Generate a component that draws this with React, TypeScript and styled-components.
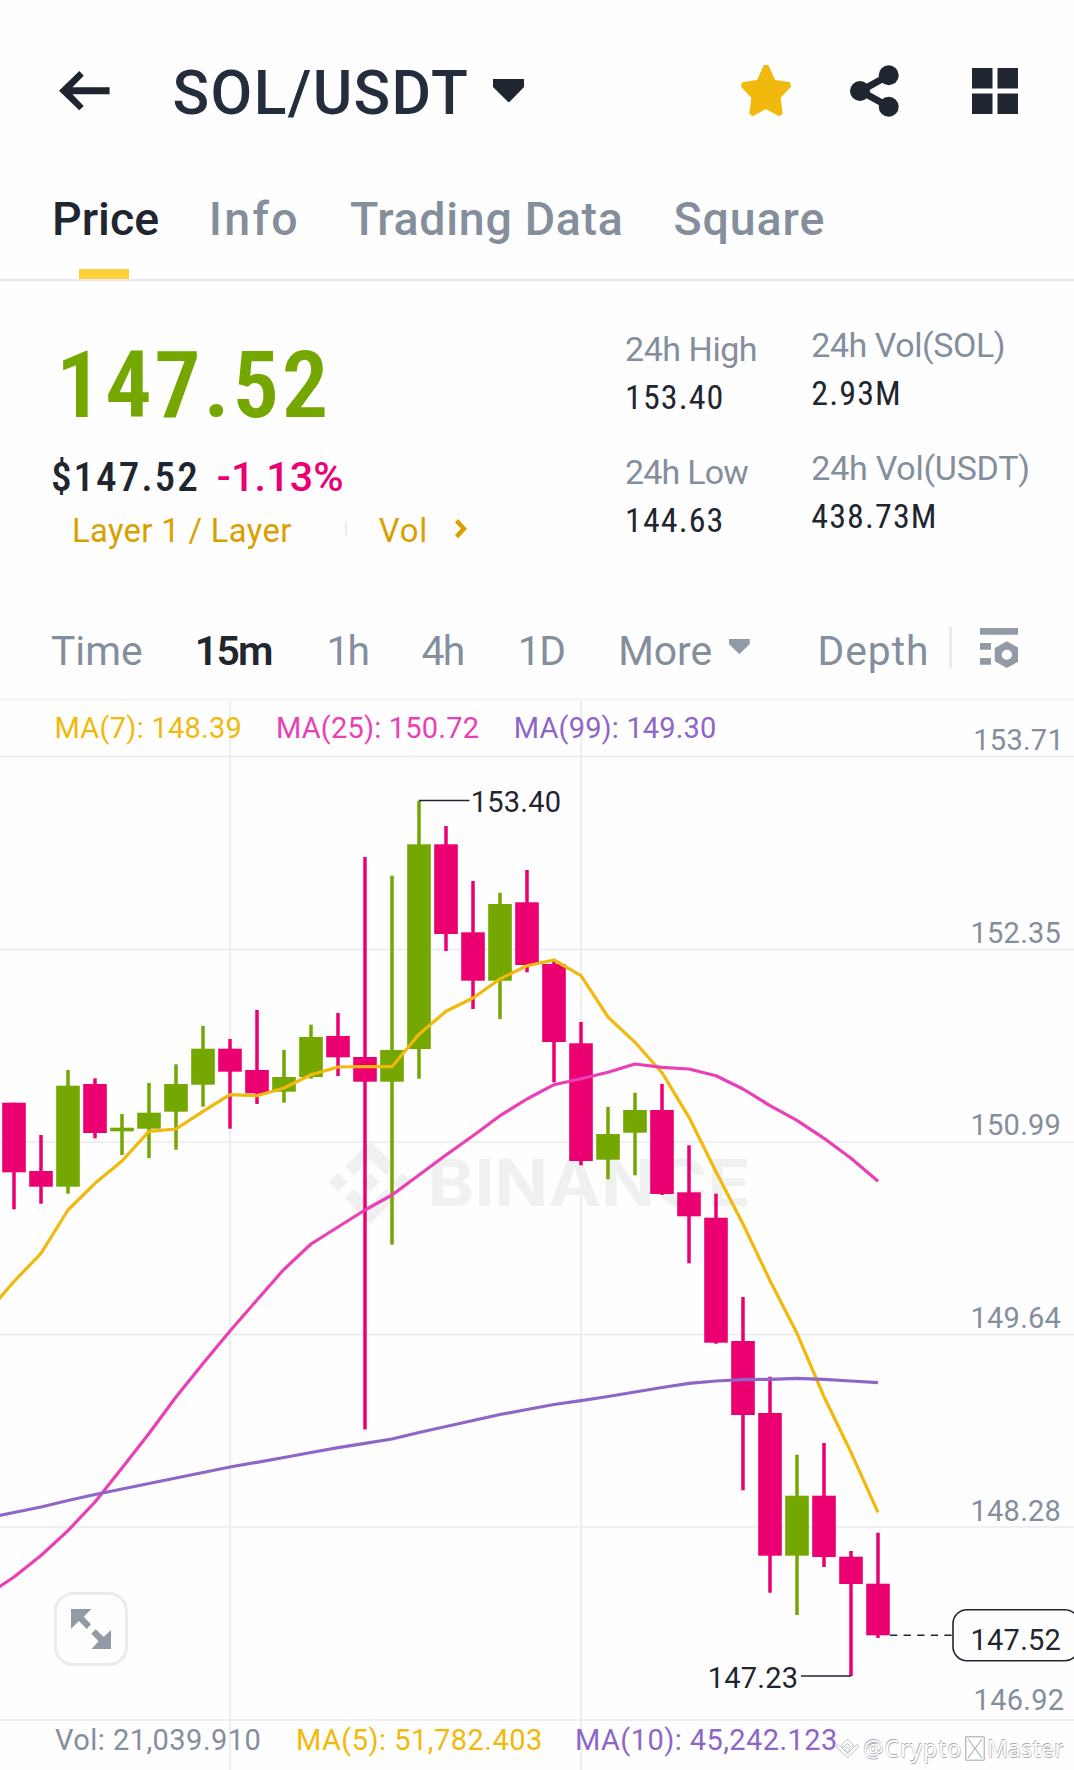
import React from 'react';
import styled, { createGlobalStyle } from 'styled-components';

const INK = '#1f2630';
const MUTED = '#848e9c';
const GOLD = '#f0b90b';
const AMBER = '#d9a000';
const PINK = '#ea3fb5';
const VIOLET = '#8d66c7';
const UP = '#74a700';
const DOWN = '#ec0071';
const RULE = '#eaebef';

const GlobalStyle = createGlobalStyle`
  body {
    margin: 0;
    background: #fefefe;
  }
`;

const Screen = styled.main`
  display: flex;
  flex-direction: column;
  width: 1074px;
  height: 1770px;
  overflow: hidden;
  background: #fefefe;
  color: ${INK};
  font-family: Roboto, 'Noto Sans', sans-serif;
`;

const Text = styled.span<{
  $size: number;
  $line: number;
  $color?: string;
  $weight?: number;
  $track?: number;
  $narrow?: boolean;
}>`
  display: block;
  white-space: pre;
  font-family: ${p => (p.$narrow ? "'Roboto Condensed', Roboto" : 'Roboto')}, sans-serif;
  font-stretch: ${p => (p.$narrow ? '75%' : '100%')};
  font-size: ${p => p.$size}px;
  line-height: ${p => p.$line}px;
  font-weight: ${p => p.$weight ?? 400};
  letter-spacing: ${p => p.$track ?? 0}px;
  color: ${p => p.$color ?? INK};
`;

const Glyph = styled.svg.attrs({ preserveAspectRatio: 'none' })<{ $w: number; $h: number; $color?: string }>`
  display: block;
  flex: none;
  width: ${p => p.$w}px;
  height: ${p => p.$h}px;
  fill: ${p => p.$color ?? INK};
`;

const Header = styled.header`
  display: flex;
  align-items: center;
  flex: none;
  height: 181px;
  padding: 0 56px 0 59px;
`;

const PairButton = styled.div`
  display: flex;
  align-items: center;
  gap: 24px;
  margin-left: 63px;
`;

const PairName = styled.div`
  padding-top: 6px;
`;

const Actions = styled.div`
  display: flex;
  align-items: center;
  margin-left: auto;
`;

const ShareSlot = styled.div`
  margin: 0 73px 0 59px;
`;

const Tabs = styled.nav`
  display: grid;
  grid-template-columns: 156.7px 141.2px 323.7px auto;
  justify-content: start;
  flex: none;
  height: 98px;
  padding-left: 52px;
  border-bottom: 2px solid #e8e8ee;
`;

const Marker = styled.div`
  width: 50px;
  height: 10px;
  margin: 12px 0 0 27px;
  background: #fbd03a;
`;

const Summary = styled.section`
  display: grid;
  grid-template-columns: 572px 186.3px 1fr;
  flex: none;
  height: 323px;
  padding-left: 53px;
  box-sizing: border-box;
`;

const Quote = styled.div`
  padding-top: 55px;
`;

const LastPrice = styled.div`
  padding-left: 3px;
`;

const Fiat = styled.div`
  display: flex;
  gap: 17px;
  margin: 14px 0 0 -2px;
`;

const Tags = styled.div`
  display: flex;
  align-items: center;
  margin: 5px 0 0 19px;
`;

const TagRule = styled.div`
  width: 2px;
  height: 14px;
  margin: 0 32px 4px 53px;
  background: ${RULE};
`;

const ChevronSlot = styled.div`
  margin: 0 0 4px 27px;
`;

const Stats = styled.div<{ $top: number }>`
  display: flex;
  flex-direction: column;
  gap: 27px;
  padding-top: ${p => p.$top}px;
`;

const Intervals = styled.nav`
  display: grid;
  grid-template-columns: 143.7px 131.7px 95.2px 96.3px 100.3px 110.8px 88.5px 131.5px 30.6px auto;
  justify-content: start;
  align-items: center;
  flex: none;
  height: 94px;
  padding-left: 51px;
  border-bottom: 3px solid #f4f5f8;
`;

const Lifted = styled.div<{ $by: number }>`
  padding-bottom: ${p => p.$by}px;
`;

const IntervalRule = styled.div`
  width: 3px;
  height: 41px;
  background: ${RULE};
`;

const ChartArea = styled.section`
  position: relative;
  height: 1069px;
`;

const Canvas = styled.svg`
  display: block;
  width: 1074px;
  height: 1069px;
`;

const AxisText = styled.text`
  font-family: Roboto, sans-serif;
  font-size: 29px;
  letter-spacing: 0.25px;
`;

const WatermarkText = styled.text`
  font-family: Inter, sans-serif;
  font-size: 64px;
  font-weight: 700;
`;

const Legend = styled.div<{ $top: number; $left: number; $cols: string }>`
  position: absolute;
  top: ${p => p.$top}px;
  left: ${p => p.$left}px;
  display: grid;
  grid-template-columns: ${p => p.$cols};
`;

const ExpandButton = styled.button`
  position: absolute;
  left: 54px;
  top: 891px;
  display: flex;
  align-items: center;
  justify-content: center;
  width: 74px;
  height: 74px;
  box-sizing: border-box;
  padding: 0;
  border: 3px solid ${RULE};
  border-radius: 19px;
  background: #fefefe;
`;

const Credit = styled.div`
  position: absolute;
  left: 835px;
  top: 1032px;
  display: flex;
  align-items: center;
  height: 30px;
`;

const CreditText = styled.span<{ $track: number }>`
  font: 400 23px/30px 'Noto Sans', sans-serif;
  letter-spacing: ${p => p.$track}px;
  color: #fff;
  text-shadow: -0.6px -0.6px 0.6px #a3a9b4, 0.6px 0.6px 0.8px #a3a9b4;
`;

const CreditLogo = styled.svg`
  width: 25px;
  height: 25px;
  margin: 0 3px 0 0;
  fill: #fff;
  stroke: #a9aeb8;
  stroke-width: 0.8;
`;

const MissingGlyph = styled.svg`
  width: 20px;
  height: 25px;
  margin: 0 2px 0 3px;
  fill: #fff;
  stroke: #9ba1ad;
  stroke-width: 1;
`;

const TABS = [
  { label: 'Price', track: 0, active: true },
  { label: 'Info', track: 2.4 },
  { label: 'Trading Data', track: 0.7 },
  { label: 'Square', track: 0.9 },
];

const STATS = [
  {
    top: 44.4,
    items: [
      { label: '24h High', track: -0.45, value: '153.40' },
      { label: '24h Low', track: -0.8, value: '144.63' },
    ],
  },
  {
    top: 40.4,
    items: [
      { label: '24h Vol(SOL)', track: -0.45, value: '2.93M' },
      { label: '24h Vol(USDT)', track: -0.25, value: '438.73M' },
    ],
  },
];

const STEP = 27;
const FIRST_X = 14;

// [rising, bodyTop, bodyBottom, high, low]
const CANDLES: [number, number, number, number, number][] = [
  [0, 1102.7, 1172.3, 1102.7, 1209.3],
  [0, 1171, 1186.7, 1135, 1203.7],
  [1, 1085.7, 1186.7, 1070, 1193.7],
  [0, 1084, 1133, 1078.3, 1138.3],
  [1, 1127.7, 1131.3, 1114, 1155],
  [1, 1112.7, 1128.7, 1083, 1158],
  [1, 1084, 1111.7, 1064.3, 1149.7],
  [1, 1048.7, 1084.7, 1026, 1106.7],
  [0, 1048.7, 1071.7, 1039, 1128.7],
  [0, 1070, 1093.3, 1010, 1104],
  [1, 1077, 1091.7, 1050, 1102.7],
  [1, 1037, 1077, 1024.7, 1078.7],
  [0, 1036, 1057.3, 1013, 1076],
  [0, 1057, 1081.7, 857, 1429.5],
  [1, 1050, 1081.7, 875.7, 1244.7],
  [1, 844.3, 1049, 800.7, 1078.7],
  [0, 844.3, 934, 826, 951],
  [0, 932.3, 980.7, 881, 1009],
  [1, 904, 980.7, 892.7, 1019],
  [0, 902.3, 965, 870, 972.3],
  [0, 964, 1042, 960, 1082.3],
  [0, 1043.3, 1161, 1022, 1165.3],
  [1, 1134, 1159.7, 1107, 1179.3],
  [1, 1110, 1132.7, 1092.7, 1175.3],
  [0, 1110, 1194, 1084, 1195],
  [0, 1192.3, 1216.3, 1145.3, 1263.3],
  [0, 1217.7, 1342.7, 1193.7, 1343.7],
  [0, 1341, 1415, 1297, 1490.3],
  [0, 1413, 1555.7, 1376.7, 1592.7],
  [1, 1495.7, 1555.7, 1454.7, 1615],
  [0, 1495.7, 1557, 1443, 1567],
  [0, 1556.7, 1584, 1551, 1676],
  [0, 1583.7, 1635.3, 1532.7, 1638],
];

const MA7 = [
  1281.5, 1253.3, 1210, 1183.3, 1161, 1131.3, 1129, 1111.3, 1094.7, 1095.7, 1088, 1074.7, 1067, 1066.5, 1066.7, 1034.3,
  1011.3, 998, 979, 965.7, 960, 975.7, 1017, 1042.3, 1072.7, 1117.3, 1171.7, 1224, 1280.7, 1333.3, 1396.7, 1452.3,
  1512.3,
];
const MA25 = [
  1577, 1555.5, 1530.6, 1502, 1468, 1433.5, 1397, 1363.5, 1331, 1300, 1269.3, 1244, 1227, 1210, 1195, 1175, 1155,
  1135.7, 1115.7, 1099, 1084.7, 1078.7, 1072.3, 1064, 1067.3, 1069, 1075.7, 1089, 1105.7, 1120.3, 1138.3, 1158.3,
  1181.3,
];
const MA99 = [
  1512.5, 1507, 1500.5, 1494.5, 1489, 1483.5, 1478, 1472.5, 1467, 1462.3, 1457.5, 1452.5, 1447.7, 1443.3, 1439, 1432.5,
  1426.5, 1420.5, 1414.5, 1409.5, 1404.5, 1400.7, 1396.5, 1392, 1387.5, 1383.3, 1381, 1379.7, 1379.3, 1378.3, 1379.3,
  1381, 1382.7,
];

const toPoints = (start: number, ys: number[]) =>
  [`-1,${start}`, ...ys.map((y, i) => `${FIRST_X + i * STEP},${y}`)].join(' ');

const LINES = [
  { color: GOLD, points: toPoints(1299, MA7) },
  { color: PINK, points: toPoints(1587, MA25) },
  { color: VIOLET, points: toPoints(1515.5, MA99) },
];

const AXIS = [
  { label: '153.71', x: 973.3, y: 750 },
  { label: '152.35', x: 970.5, y: 943 },
  { label: '150.99', x: 970.5, y: 1135 },
  { label: '149.64', x: 970.5, y: 1327.7 },
  { label: '148.28', x: 970.5, y: 1520.7 },
  { label: '146.92', x: 973.6, y: 1710 },
];

const BRAND_PATH =
  'M16.624 13.9202l2.7175 2.7154-7.353 7.353-7.353-7.352 2.7175-2.7164 4.6355 4.6595 4.6356-4.6595zm4.6366-4.6366L24 12l-2.7154 2.7164L18.5682 12l2.6924-2.7164zm-9.272.001l2.7163 2.6914-2.7164 2.7174v-.001L9.2721 12l2.7164-2.7154zm-9.2722-.001L5.4088 12l-2.6914 2.6924L0 12l2.7164-2.7164zM11.9885.0115l7.353 7.329-2.7174 2.7154-4.6356-4.6356-4.6355 4.6595-2.7174-2.7154 7.353-7.353z';

function Chart() {
  return (
    <Canvas viewBox="0 701 1074 1069">
      {[756.5, 949.5, 1142, 1334.5, 1527, 1720].map(y => (
        <line key={y} x1="0" x2="1074" y1={y} y2={y} stroke={RULE} strokeWidth="1.7" />
      ))}
      {[230, 581.2].map(x => (
        <line key={x} x1={x} x2={x} y1="701" y2="1770" stroke={RULE} strokeWidth="1.7" />
      ))}
      <g fill="#eff1f1">
        <path d={BRAND_PATH} transform="translate(329 1141) scale(3.45)" />
        <WatermarkText x="427.6" y="1206" textLength="323" lengthAdjust="spacingAndGlyphs">
          BINANCE
        </WatermarkText>
      </g>
      {CANDLES.map(([rising, top, bottom, high, low], i) => {
        const x = FIRST_X + i * STEP;
        return (
          <g key={x} fill={rising ? UP : DOWN}>
            <rect x={x - 1.75} y={high} width="3.5" height={low - high} />
            <rect x={x - 11.8} y={top} width="23.6" height={bottom - top} />
          </g>
        );
      })}
      {LINES.map(l => (
        <polyline key={l.color} points={l.points} fill="none" stroke={l.color} strokeWidth="3.2" strokeLinejoin="round" />
      ))}
      {AXIS.map(a => (
        <AxisText key={a.label} x={a.x} y={a.y} fill={MUTED}>
          {a.label}
        </AxisText>
      ))}
      <g stroke={INK} strokeWidth="1.6" fill="none">
        <path d="M419 800.5H469.5" />
        <path d="M801 1676H851" />
        <path d="M890 1635.3H952" strokeDasharray="7.3 6.3" />
        <rect x="953" y="1609.7" width="126" height="51" rx="14" fill="#fefefe" />
      </g>
      <AxisText x="470.7" y="812" fill={INK}>
        153.40
      </AxisText>
      <AxisText x="707.7" y="1688" fill={INK}>
        147.23
      </AxisText>
      <AxisText x="970.5" y="1649.7" fill={INK}>
        147.52
      </AxisText>
    </Canvas>
  );
}

export default function App() {
  return (
    <>
      <GlobalStyle />
      <Screen>
        <Header>
          <Glyph $w={50.6} $h={39.3} viewBox="172 212 147 118">
            <path d="M231 212L244 226 211 261H319V282H211L244 317 231 330 172 271Z" />
          </Glyph>
          <PairButton>
            <PairName>
              <Text $size={60.5} $line={74} $weight={500} $track={1.37} $color="#242d3c">
                SOL/USDT
              </Text>
            </PairName>
            <Glyph $w={31} $h={23.7} viewBox="1434 235 90 71">
              <path d="M1434 235H1524V259L1480 306 1434 259Z" />
            </Glyph>
          </PairButton>
          <Actions>
            <Glyph $w={50} $h={51.5} $color={GOLD} viewBox="601 195 145 154.5">
              <path d="M667 195H680L700 240 743 247 746 260 716 293 722 341 712 349 673 327 635 349 625 341 631 293 601 260 604 247 648 240Z" />
            </Glyph>
            <ShareSlot>
              <Glyph $w={49} $h={52} viewBox="0 0 49 52">
                <path d="M38.5 10.5L10.5 26 38.5 41.5" fill="none" stroke={INK} strokeWidth="7" />
                <circle cx="38.7" cy="10.3" r="10" />
                <circle cx="10" cy="26" r="10" />
                <circle cx="38.7" cy="41.7" r="10" />
              </Glyph>
            </ShareSlot>
            <Glyph $w={46} $h={46} viewBox="0 0 46 46">
              <path d="M0 0H20.5V20.5H0ZM25.5 0H46V20.5H25.5ZM0 25.5H20.5V46H0ZM25.5 25.5H46V46H25.5Z" />
            </Glyph>
          </Actions>
        </Header>

        <Tabs>
          {TABS.map(t => (
            <div key={t.label}>
              <Text $size={46.5} $line={76} $weight={500} $track={t.track} $color={t.active ? INK : MUTED}>
                {t.label}
              </Text>
              {t.active && <Marker />}
            </div>
          ))}
        </Tabs>

        <Summary>
          <Quote>
            <LastPrice>
              <Text $size={92.4} $line={100} $weight={600} $track={2.7} $color={UP} $narrow>
                147.52
              </Text>
            </LastPrice>
            <Fiat>
              <Text $size={41.2} $line={54} $weight={500} $track={1.95} $narrow>
                $147.52
              </Text>
              <Text $size={41.2} $line={54} $weight={500} $track={0.2} $color={DOWN}>
                -1.13%
              </Text>
            </Fiat>
            <Tags>
              <Text $size={32.8} $line={44} $track={0.34} $color={AMBER}>
                Layer 1 / Layer
              </Text>
              <TagRule />
              <Text $size={32.8} $line={44} $track={0.9} $color={AMBER}>
                Vol
              </Text>
              <ChevronSlot>
                <Glyph $w={12} $h={19.3} $color={AMBER} viewBox="1323 627 35 58">
                  <path d="M1332 627L1358 656 1332 685 1323 675 1340 656 1323 637Z" />
                </Glyph>
              </ChevronSlot>
            </Tags>
          </Quote>
          {STATS.map(col => (
            <Stats key={col.top} $top={col.top}>
              {col.items.map(item => (
                <div key={item.label}>
                  <Text $size={34} $line={48} $track={item.track} $color={MUTED}>
                    {item.label}
                  </Text>
                  <Text $size={34} $line={48} $track={1.1} $narrow>
                    {item.value}
                  </Text>
                </div>
              ))}
            </Stats>
          ))}
        </Summary>

        <Intervals>
          <Text $size={40.8} $line={60} $color={MUTED}>
            Time
          </Text>
          <Text $size={40.8} $line={60} $weight={600} $track={-1.6}>
            15m
          </Text>
          <Text $size={40.8} $line={60} $track={-1.7} $color={MUTED}>
            1h
          </Text>
          <Text $size={40.8} $line={60} $track={-1.7} $color={MUTED}>
            4h
          </Text>
          <Text $size={40.8} $line={60} $track={-1.5} $color={MUTED}>
            1D
          </Text>
          <Text $size={40.8} $line={60} $color={MUTED}>
            More
          </Text>
          <Lifted $by={8}>
            <Glyph $w={20.7} $h={15.3} $color="#929aa5" viewBox="566 117 60 46">
              <path d="M566 117H626V132L596 163 566 132Z" />
            </Glyph>
          </Lifted>
          <Text $size={40.8} $line={60} $track={1} $color={MUTED}>
            Depth
          </Text>
          <Lifted $by={7}>
            <IntervalRule />
          </Lifted>
          <Lifted $by={6}>
            <Glyph $w={38.9} $h={40} $color="#929aa5" viewBox="1294 84 113 120">
              <path
                fillRule="evenodd"
                d="M1294 84H1407V104H1294ZM1294 129H1326V149H1294ZM1294 174H1326V194H1294ZM1372 124L1407 144V184L1372 204 1337 184V144ZM1357 164a15 15 0 1 0 30 0a15 15 0 1 0 -30 0Z"
              />
            </Glyph>
          </Lifted>
        </Intervals>

        <ChartArea>
          <Chart />
          <Legend $top={6.8} $left={54.5} $cols="221.4px 237.9px auto">
            <Text $size={29} $line={40} $track={0.27} $color={GOLD}>
              MA(7): 148.39
            </Text>
            <Text $size={29} $line={40} $track={0.2} $color={PINK}>
              MA(25): 150.72
            </Text>
            <Text $size={29} $line={40} $track={0.16} $color={VIOLET}>
              MA(99): 149.30
            </Text>
          </Legend>
          <ExpandButton aria-label="Expand chart">
            <Glyph $w={40.6} $h={40.7} $color="#929aa5" viewBox="206 116 118 122">
              <path d="M206 116H265L243 139 264 162 252 176 229 152 206 176ZM324 238H264L286 213 265 190 278 177 301 200 324 177Z" />
            </Glyph>
          </ExpandButton>
          <Legend $top={1019} $left={55} $cols="240.9px 279.1px auto">
            <Text $size={29} $line={40} $track={0.46} $color={MUTED}>
              Vol: 21,039.910
            </Text>
            <Text $size={29} $line={40} $track={0.48} $color={GOLD}>
              MA(5): 51,782.403
            </Text>
            <Text $size={29} $line={40} $track={0.43} $color={VIOLET}>
              MA(10): 45,242.123
            </Text>
          </Legend>
          <Credit>
            <CreditLogo viewBox="0 0 24 24">
              <path
                d="M12 1L18 7 15.8 9 12 5.4 8.2 9 6 7ZM0.8 7.8L3 6 12 15 21 6 23.2 7.8 12 19ZM12 8.5L14.5 11 12 13.4 9.5 11Z"
                transform="translate(0 2)"
              />
            </CreditLogo>
            <CreditText $track={0.9}>@Crypto</CreditText>
            <MissingGlyph viewBox="0 0 20 25">
              <path d="M0.8 0.8H19.2V24.2H0.8ZM3 3L17 22M17 3L3 22" />
            </MissingGlyph>
            <CreditText $track={0.2}>Master</CreditText>
          </Credit>
        </ChartArea>
      </Screen>
    </>
  );
}
